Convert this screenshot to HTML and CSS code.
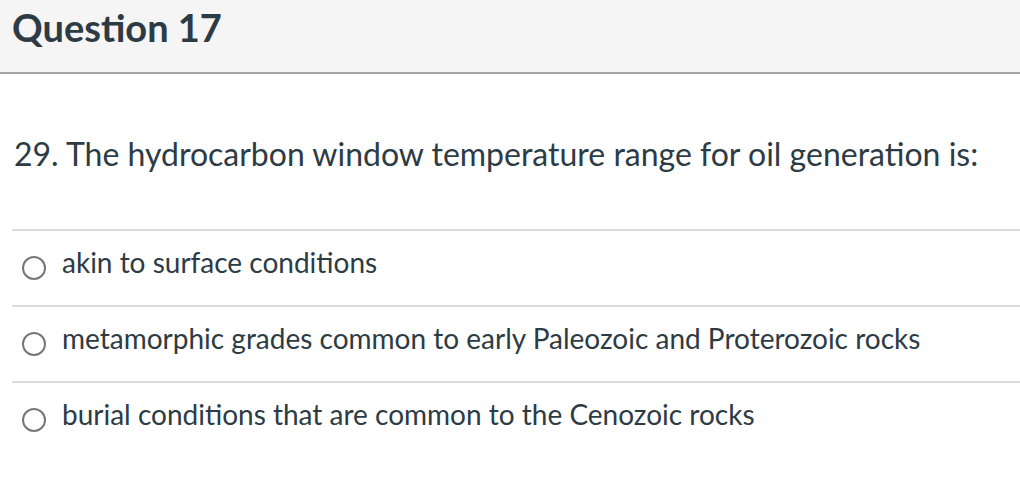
FILE: index.html
```html
<!DOCTYPE html>
<html lang="en">
<head>
<meta charset="utf-8">
<link rel="stylesheet" href="styles.css">
</head>
<body>
<div class="header"><h2 class="title">Question 17</h2></div>
<div class="question">29. The hydrocarbon window temperature range for oil generation is:</div>
<div class="answers">
  <label class="answer"><span class="radio"></span><span class="label">akin to surface conditions</span></label>
  <label class="answer"><span class="radio"></span><span class="label">metamorphic grades common to early Paleozoic and Proterozoic rocks</span></label>
  <label class="answer"><span class="radio"></span><span class="label">burial conditions that are common to the Cenozoic rocks</span></label>
</div>
</body>
</html>
```
FILE: styles.css
```css
html, body {
  margin: 0;
  padding: 0;
  background: #fff;
  font-family: Lato, "Liberation Sans", sans-serif;
  color: #2d3b45;
}
.header {
  box-sizing: border-box;
  background: #f5f5f5;
  border-bottom: 2px solid #a5a5a5;
  height: 74px;
  padding: 8px 0 0 12px;
}
.title {
  margin: 0;
  font-size: 38px;
  font-weight: 700;
  line-height: 1;
}
.question {
  box-sizing: border-box;
  height: 155px;
  padding: 61px 0 0 14px;
  font-size: 32px;
  line-height: 1.2;
}
.answers {
  margin-left: 12px;
}
.answer {
  display: flex;
  align-items: center;
  gap: 16px;
  height: 74px;
  border-top: 2px solid #dcdcdc;
  padding-left: 10px;
  font-size: 28px;
}
.label {
  line-height: 1.2;
  margin-bottom: 10px;
}
.radio {
  width: 20px;
  height: 20px;
  border: 2px solid #777;
  border-radius: 50%;
  flex: none;
}
```
